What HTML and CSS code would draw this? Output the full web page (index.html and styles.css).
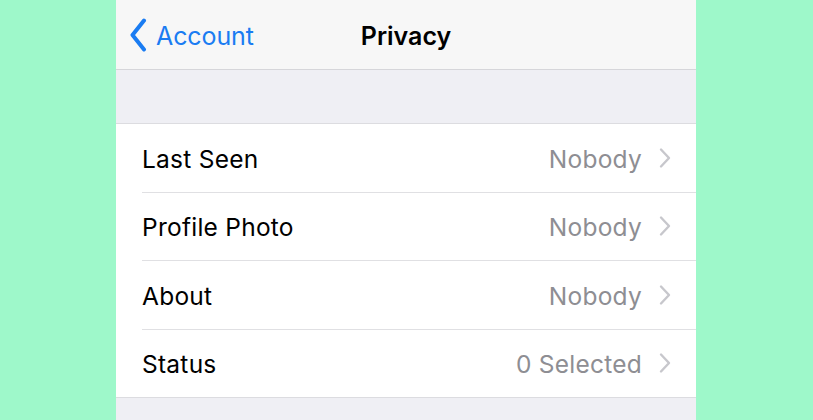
FILE: index.html
```html
<!DOCTYPE html>
<html>
<head>
<meta charset="utf-8">
<link rel="stylesheet" href="styles.css">
</head>
<body>
<div class="phone">
  <header class="nav">
    <div class="back">
      <svg class="back-chev" width="18" height="34" viewBox="0 0 18 34"><path d="M15 2.5 L3.5 17 L15 31.5" fill="none" stroke="#1a7cf2" stroke-width="4" stroke-linecap="round" stroke-linejoin="round"/></svg>
      <span class="back-label">Account</span>
    </div>
    <div class="title">Privacy</div>
  </header>
  <div class="gap"></div>
  <ul class="list">
    <li class="row"><span class="label">Last Seen</span><span class="value">Nobody</span><svg class="chev" width="14" height="22" viewBox="0 0 14 22"><path d="M3 2.5 L11 11 L3 19.5" fill="none" stroke="#c7c7cc" stroke-width="2.4" stroke-linecap="round" stroke-linejoin="round"/></svg></li>
    <li class="row"><span class="label">Profile Photo</span><span class="value">Nobody</span><svg class="chev" width="14" height="22" viewBox="0 0 14 22"><path d="M3 2.5 L11 11 L3 19.5" fill="none" stroke="#c7c7cc" stroke-width="2.4" stroke-linecap="round" stroke-linejoin="round"/></svg></li>
    <li class="row"><span class="label">About</span><span class="value">Nobody</span><svg class="chev" width="14" height="22" viewBox="0 0 14 22"><path d="M3 2.5 L11 11 L3 19.5" fill="none" stroke="#c7c7cc" stroke-width="2.4" stroke-linecap="round" stroke-linejoin="round"/></svg></li>
    <li class="row"><span class="label">Status</span><span class="value">0 Selected</span><svg class="chev" width="14" height="22" viewBox="0 0 14 22"><path d="M3 2.5 L11 11 L3 19.5" fill="none" stroke="#c7c7cc" stroke-width="2.4" stroke-linecap="round" stroke-linejoin="round"/></svg></li>
  </ul>
  <div class="footer-gap"></div>
</div>
</body>
</html>
```
FILE: styles.css
```css
html, body {
  margin: 0;
  padding: 0;
  height: 100%;
  overflow: hidden;
}
body {
  background: #9ef8ca;
  font-family: Inter, "Liberation Sans", Arial, sans-serif;
}
.phone {
  width: 580px;
  height: 420px;
  margin-left: 116px;
  background: #efeff4;
  display: flex;
  flex-direction: column;
}
.nav {
  height: 69px;
  background: #f7f7f7;
  border-bottom: 1px solid #d6d6da;
  display: flex;
  align-items: center;
  position: relative;
  flex-shrink: 0;
}
.back {
  display: flex;
  align-items: center;
  padding-left: 13px;
  gap: 9px;
  color: #1a7cf2;
  font-size: 25px;
  margin-top: 1px;
}
.back-chev {
  display: block;
}
.back-label {
  letter-spacing: -0.1px;
  padding-top: 1px;
}
.title {
  position: absolute;
  left: 0;
  right: 0;
  text-align: center;
  font-weight: 600;
  font-size: 25px;
  color: #000;
  pointer-events: none;
  margin-top: 3px;
}
.gap {
  height: 53px;
  flex-shrink: 0;
  border-bottom: 1px solid #dcdce0;
}
.list {
  list-style: none;
  margin: 0;
  padding: 0 0 0 26px;
  background: #fff;
  border-bottom: 1px solid #dcdce0;
  flex-shrink: 0;
}
.row {
  height: 67.5px;
  display: flex;
  align-items: center;
  padding-right: 24px;
  border-bottom: 1px solid #e0e0e3;
}
.row:last-child {
  border-bottom: none;
}
.label {
  flex: 1;
  font-size: 24.5px;
  color: #000;
  letter-spacing: 0.25px;
  padding-top: 2px;
}
.value {
  font-size: 24.5px;
  color: #8e8e93;
  margin-right: 16px;
  letter-spacing: 0.25px;
  padding-top: 2px;
}
.chev {
  display: block;
}
.footer-gap {
  flex: 1;
}
```
